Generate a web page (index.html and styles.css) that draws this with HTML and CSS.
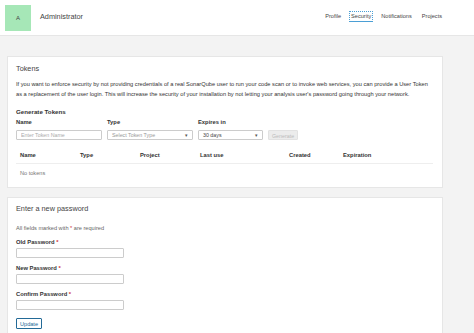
FILE: index.html
```html
<!DOCTYPE html>
<html lang="en">
<head>
<meta charset="UTF-8" />
<title>My Account - Security</title>
<link rel="stylesheet" href="styles.css">
</head>
<body>

<header class="account-header">
  <div class="account-user">
    <div class="avatar">A</div>
    <span class="user-name">Administrator</span>
  </div>
  <nav class="account-nav">
    <a href="#">Profile</a>
    <a href="#" class="active">Security</a>
    <a href="#">Notifications</a>
    <a href="#">Projects</a>
  </nav>
</header>

<main class="page">
  <section class="card tokens-card">
    <h2 class="card-title">Tokens</h2>
    <p class="intro">If you want to enforce security by not providing credentials of a real SonarQube user to run your code scan or to invoke web services, you can provide a User Token as a replacement of the user login. This will increase the security of your installation by not letting your analysis user's password going through your network.</p>

    <h3 class="sub-title">Generate Tokens</h3>
    <form class="token-form">
      <div class="field name-field">
        <label>Name</label>
        <input type="text" placeholder="Enter Token Name">
      </div>
      <div class="field type-field">
        <label>Type</label>
        <div class="select muted">Select Token Type<span class="caret">&#9662;</span></div>
      </div>
      <div class="field expires-field">
        <label>Expires in</label>
        <div class="select">30 days<span class="caret">&#9662;</span></div>
      </div>
      <button type="button" class="btn-disabled">Generate</button>
    </form>

    <table class="tokens">
      <thead>
        <tr><th class="c-name">Name</th><th class="c-type">Type</th><th class="c-project">Project</th><th class="c-last">Last use</th><th class="c-created">Created</th><th>Expiration</th></tr>
      </thead>
      <tbody>
        <tr><td colspan="6" class="empty">No tokens</td></tr>
      </tbody>
    </table>
  </section>

  <section class="card password-card">
    <h2 class="card-title">Enter a new password</h2>
    <p class="note">All fields marked with <span class="req">*</span> are required</p>
    <div class="pw-field">
      <label>Old Password <span class="req">*</span></label>
      <input type="password">
    </div>
    <div class="pw-field">
      <label>New Password <span class="req">*</span></label>
      <input type="password">
    </div>
    <div class="pw-field">
      <label>Confirm Password <span class="req">*</span></label>
      <input type="password">
    </div>
    <button type="button" class="btn-update">Update</button>
  </section>
</main>

</body>
</html>
```

FILE: styles.css
```css
html, body {
  margin: 0;
  padding: 0;
}
body {
  font-family: "Liberation Sans", Arial, sans-serif;
  font-size: 6px;
  line-height: 10px;
  color: #333;
  background-color: #f3f3f3;
  overflow: hidden;
}
.account-header {
  display: flex;
  align-items: center;
  justify-content: space-between;
  height: 35px;
  padding: 0 30px 0 5px;
  background-color: #fff;
  border-bottom: 1px solid #e6e6e6;
}
.account-user {
  display: flex;
  align-items: center;
  gap: 9px;
}
.avatar {
  width: 26px;
  height: 26px;
  background-color: #a6e7b7;
  color: #444;
  display: flex;
  align-items: center;
  justify-content: center;
  font-size: 6px;
}
.user-name {
  font-size: 7.3px;
  color: #444;
  margin-top: -2px;
}
.account-nav {
  display: flex;
  gap: 6px;
  align-items: center;
  margin-top: -3px;
}
.account-nav a {
  color: #444;
  text-decoration: none;
  font-size: 5.6px;
  line-height: 8px;
  padding: 0 1px 1px;
  border: 1px solid transparent;
}
.account-nav a.active {
  border: 1px dotted #4b9fd5;
  border-bottom: 1px solid #4b9fd5;
}
.page {
  padding: 20px 31px 0 7px;
}
.card {
  background-color: #fff;
  border: 1px solid #e6e6e6;
  padding: 7px 8px 5px;
  margin-bottom: 9px;
}
.password-card {
  padding-top: 6px;
}
.card-title {
  font-size: 7.3px;
  font-weight: normal;
  color: #444;
  margin: 0 0 5px;
}
.intro {
  max-width: 415px;
  margin: 0 0 8px;
  font-size: 5.7px;
}
.sub-title {
  font-size: 6.2px;
  font-weight: bold;
  color: #333;
  margin: 0;
}
.token-form {
  display: flex;
  align-items: flex-end;
  gap: 5px;
  margin-bottom: 6px;
}
.field label, .pw-field label {
  display: block;
  font-weight: bold;
  font-size: 5.8px;
  margin-bottom: 3px;
}
.field input, .pw-field input, .select {
  box-sizing: border-box;
  height: 10px;
  border: 1px solid #ccc;
  border-radius: 1px;
  font: inherit;
  font-size: 5.3px;
  padding: 0 4px;
  margin: 0;
  background: #fff;
  display: block;
}
.field input::placeholder {
  color: #aaa;
}
.name-field input {
  width: 86px;
}
.select {
  display: flex;
  align-items: center;
  justify-content: space-between;
  color: #444;
}
.select.muted {
  color: #999;
}
.caret {
  font-size: 5px;
  color: #555;
}
.type-field .select {
  width: 86px;
}
.expires-field .select {
  width: 65px;
}
.btn-disabled {
  height: 10px;
  padding: 0 3px;
  font: inherit;
  font-size: 5.3px;
  color: #bbb;
  background-color: #ececec;
  border: 1px solid #e2e2e2;
  border-radius: 1px;
}
.tokens {
  width: 417px;
  border-collapse: collapse;
}
.tokens th {
  text-align: left;
  font-weight: bold;
  font-size: 5.8px;
  padding: 4px 4px 3px;
  border-bottom: 1px solid #eee;
}
.tokens .c-name, .tokens .c-type, .tokens .c-project {
  width: 52px;
}
.tokens .c-last {
  width: 81px;
}
.tokens .c-created {
  width: 46px;
}
.tokens td.empty {
  padding: 4px 4px;
  color: #777;
  font-size: 5.6px;
}
.note {
  margin: 9px 0 4px;
  color: #666;
  font-size: 5.6px;
}
.req {
  color: #d02f3a;
}
.pw-field {
  margin-bottom: 5px;
}
.pw-field label {
  margin-bottom: 1px;
}
.pw-field input {
  width: 108px;
}
.btn-update {
  display: block;
  height: 11px;
  padding: 0 3px;
  margin-top: 8px;
  font: inherit;
  font-size: 5.6px;
  color: #236a97;
  background-color: #fff;
  border: 1px solid #236a97;
  border-radius: 1px;
}
```
